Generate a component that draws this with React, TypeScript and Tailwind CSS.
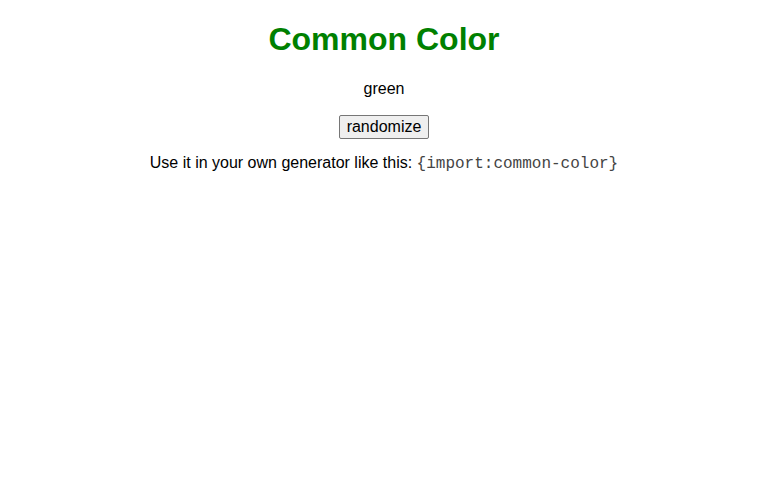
export default function App() {
  return (
    <div className="w-[768px] h-[480px] bg-white flex flex-col items-center text-black" style={{ fontFamily: '"Liberation Sans", Arial, sans-serif' }}>
      <h1 className="mt-[21px] text-[32px] leading-[37px] font-bold text-[#008000]">Common Color</h1>
      <div className="mt-[22px] text-[16px] leading-[18px]">green</div>
      <button className="mt-[17px] h-[24px] px-[7px] text-[16px] leading-[18px] bg-[#efefef] border border-[#767676] rounded-[2px] text-black">randomize</button>
      <div className="mt-[15px] text-[16px] leading-[18px]">
        Use it in your own generator like this:{' '}
        <code className="text-[16px] text-[#444]" style={{ fontFamily: '"Liberation Mono", "Courier New", monospace' }}>{'{import:common-color}'}</code>
      </div>
    </div>
  );
}
